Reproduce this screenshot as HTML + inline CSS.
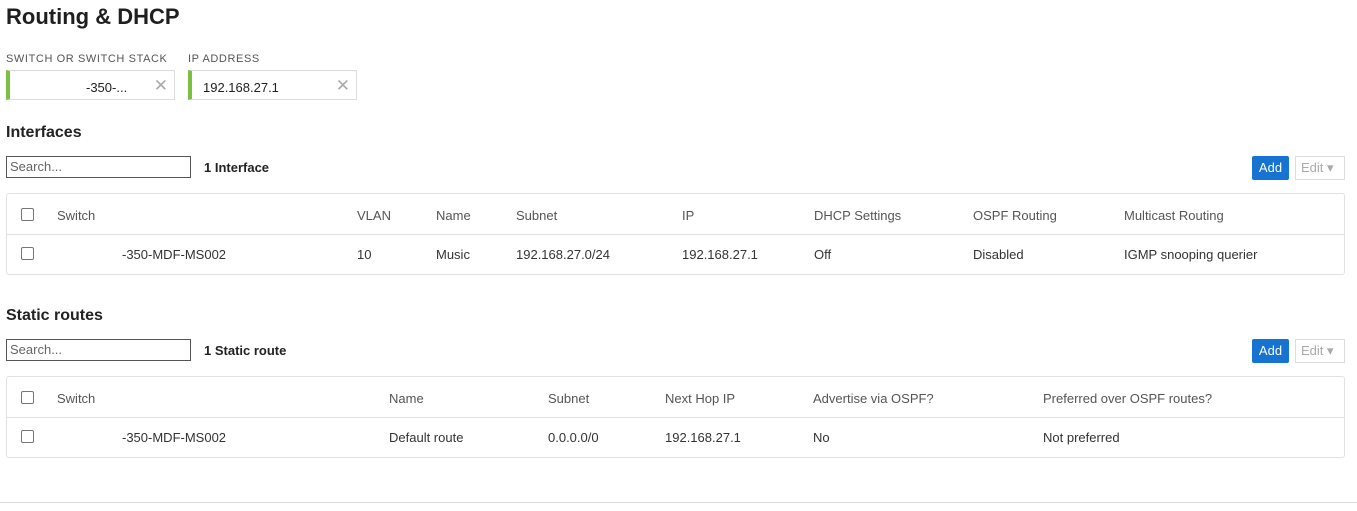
<!DOCTYPE html>
<html><head><style>
body{margin:0;width:1357px;height:511px;background:#fff;font-family:"Liberation Sans",sans-serif;color:#222;position:relative;overflow:hidden}
.a{position:absolute;white-space:nowrap}
h1{position:absolute;left:6px;top:4px;margin:0;font-size:22px;font-weight:bold;color:#1f1f1f}
.lbl{font-size:11px;letter-spacing:.6px;color:#555}
.inp{position:absolute;height:30px;border:1px solid #ddd;border-left:4px solid #7ac143;box-sizing:border-box;font-size:13px}
.x{position:absolute;right:6px;top:5px;color:#aaa;font-size:17px}
h2{position:absolute;margin:0;font-size:16px;font-weight:bold;color:#222}
.search{position:absolute;left:6px;width:185px;height:22px;border:1px solid #555;box-sizing:border-box;font-size:13px;color:#666;padding:2px 3px}
.cnt{font-size:13px;font-weight:bold}
.add{position:absolute;left:1252px;width:37px;height:24px;background:#1673d1;color:#fff;font-size:13px;text-align:center;line-height:24px;border-radius:2px}
.edit{position:absolute;left:1295px;width:50px;height:24px;border:1px solid #ddd;box-sizing:border-box;color:#aaa;font-size:13px;line-height:22px;padding-left:5px}
.tbl{position:absolute;left:6px;width:1339px;height:82px;border:1px solid #e2e2e2;border-radius:3px;box-sizing:border-box}
.tbl .mid{position:absolute;left:0;right:0;top:40px;border-top:1px solid #e2e2e2}
.t{font-size:13px;color:#333}
.hd{color:#555}
.cb{position:absolute;width:11px;height:11px;border:1px solid #777;border-radius:2px;left:21px}
</style></head><body>
<h1>Routing &amp; DHCP</h1>
<div class="a lbl" style="left:6px;top:53px">SWITCH OR SWITCH STACK</div>
<div class="a lbl" style="left:188px;top:53px">IP ADDRESS</div>
<div class="inp" style="left:6px;top:70px;width:169px"><span class="a" style="left:76px;top:9px">-350-...</span><span class="x">✕</span></div>
<div class="inp" style="left:188px;top:70px;width:169px"><span class="a" style="left:11px;top:9px">192.168.27.1</span><span class="x">✕</span></div>

<h2 style="left:6px;top:124px">Interfaces</h2>
<div class="search" style="top:156px">Search...</div>
<div class="a cnt" style="left:204px;top:160px">1 Interface</div>
<div class="add" style="top:156px">Add</div>
<div class="edit" style="top:156px">Edit ▾</div>
<div class="tbl" style="top:193px"><div class="mid"></div></div>
<div class="cb" style="top:208px"></div><div class="cb" style="top:247px"></div>
<div class="a t hd" style="top:208px;left:57px">Switch</div>
<div class="a t hd" style="top:208px;left:357px">VLAN</div>
<div class="a t hd" style="top:208px;left:436px">Name</div>
<div class="a t hd" style="top:208px;left:516px">Subnet</div>
<div class="a t hd" style="top:208px;left:682px">IP</div>
<div class="a t hd" style="top:208px;left:814px">DHCP Settings</div>
<div class="a t hd" style="top:208px;left:973px">OSPF Routing</div>
<div class="a t hd" style="top:208px;left:1124px">Multicast Routing</div>
<div class="a t" style="top:247px;left:122px">-350-MDF-MS002</div>
<div class="a t" style="top:247px;left:357px">10</div>
<div class="a t" style="top:247px;left:436px">Music</div>
<div class="a t" style="top:247px;left:516px">192.168.27.0/24</div>
<div class="a t" style="top:247px;left:682px">192.168.27.1</div>
<div class="a t" style="top:247px;left:814px">Off</div>
<div class="a t" style="top:247px;left:973px">Disabled</div>
<div class="a t" style="top:247px;left:1124px">IGMP snooping querier</div>

<h2 style="left:6px;top:307px">Static routes</h2>
<div class="search" style="top:339px">Search...</div>
<div class="a cnt" style="left:204px;top:343px">1 Static route</div>
<div class="add" style="top:339px">Add</div>
<div class="edit" style="top:339px">Edit ▾</div>
<div class="tbl" style="top:376px"><div class="mid"></div></div>
<div class="cb" style="top:391px"></div><div class="cb" style="top:430px"></div>
<div class="a t hd" style="top:391px;left:57px">Switch</div>
<div class="a t hd" style="top:391px;left:389px">Name</div>
<div class="a t hd" style="top:391px;left:548px">Subnet</div>
<div class="a t hd" style="top:391px;left:665px">Next Hop IP</div>
<div class="a t hd" style="top:391px;left:813px">Advertise via OSPF?</div>
<div class="a t hd" style="top:391px;left:1043px">Preferred over OSPF routes?</div>
<div class="a t" style="top:430px;left:122px">-350-MDF-MS002</div>
<div class="a t" style="top:430px;left:389px">Default route</div>
<div class="a t" style="top:430px;left:548px">0.0.0.0/0</div>
<div class="a t" style="top:430px;left:665px">192.168.27.1</div>
<div class="a t" style="top:430px;left:813px">No</div>
<div class="a t" style="top:430px;left:1043px">Not preferred</div>
<div class="a" style="left:0;top:502px;width:1357px;border-top:1px solid #ddd"></div>
</body></html>
